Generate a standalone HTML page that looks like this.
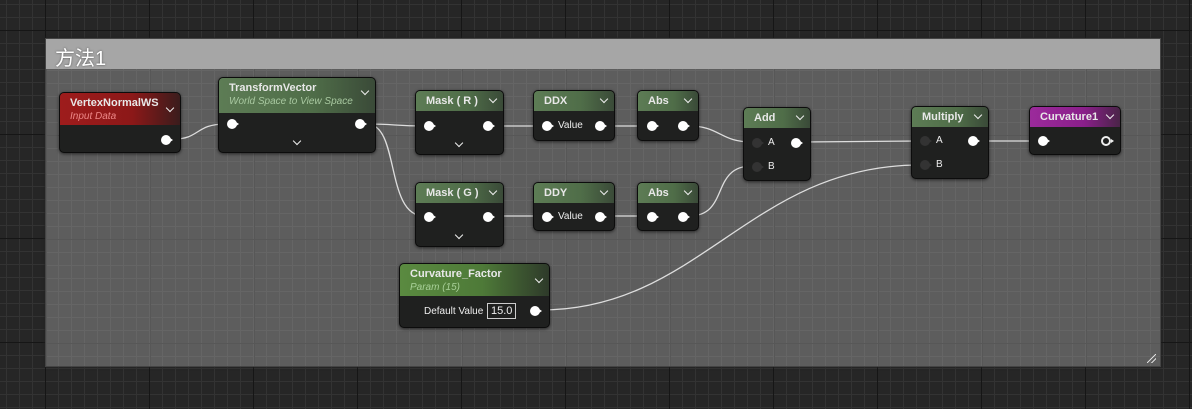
<!DOCTYPE html>
<html><head><meta charset="utf-8"><style>
*{margin:0;padding:0;box-sizing:border-box}
body{width:1192px;height:409px;overflow:hidden;background:#262626;position:relative;font-family:"Liberation Sans","Noto Sans CJK SC",sans-serif;
background-image:linear-gradient(90deg,#161616 1px,transparent 1px),linear-gradient(#161616 1px,transparent 1px),linear-gradient(90deg,#333 1px,transparent 1px),linear-gradient(#333 1px,transparent 1px);
background-size:104px 104px,104px 104px,13px 13px,13px 13px;background-position:45px 30px,45px 30px,6px 4px,6px 4px}
.cm{position:absolute;left:45px;top:38px;width:1116px;height:329px;background-color:#5d5d5d;
background-image:linear-gradient(90deg,#575757 1px,transparent 1px),linear-gradient(#575757 1px,transparent 1px),linear-gradient(90deg,#656565 1px,transparent 1px),linear-gradient(#656565 1px,transparent 1px);
background-size:104px 104px,104px 104px,13px 13px,13px 13px;background-position:0 -8px,0 -8px,-1px -8px,-1px -8px;border:1px solid #444;box-shadow:0 0 3px #222}
.tb{position:absolute;left:0;top:0;right:0;height:30px;background:#a6a6a6;color:#fff;font-size:20px;padding:3px 0 0 9px;text-shadow:0 0 2px #555}
.n{position:absolute;background:#1f201f;border:1px solid #0c0c0c;border-radius:5px;box-shadow:0 1px 3px rgba(0,0,0,.6);overflow:hidden;color:#ddd;font-size:11px}
.h{position:relative;color:#e8e8e8;font-weight:bold;font-size:11px;padding:4px 0 0 10px;height:20px}
.g{background:linear-gradient(90deg,#5d7c55,#4f6d48 60%,#3a4a38)}
.h .s{display:block;font-style:italic;font-weight:normal;font-size:10px;margin-top:2px}
.v{position:absolute;right:7px;top:5px;width:6px;height:6px;border-right:1.5px solid #eee;border-bottom:1.5px solid #eee;transform:rotate(45deg)}
.vb{position:absolute;width:6px;height:6px;border-right:1.5px solid #eee;border-bottom:1.5px solid #eee;transform:rotate(45deg)}
.p{position:absolute;width:10px;height:10px;border-radius:50%;background:#fff}
.p:after{content:"";position:absolute;left:9px;top:3px;border-left:3px solid #fff;border-top:2px solid transparent;border-bottom:2px solid transparent}
.p.d{background:#333}.p.d:after{border-left-color:#333}
.p.o{background:none;border:2px solid #eee}.p.o:after{left:8px;top:1px;border-left-color:#eee}
.t{position:absolute;font-size:10px;color:#eee}
svg{position:absolute;left:0;top:0}
</style></head><body>
<div class="cm"><div class="tb">方法1</div>
<div style="position:absolute;right:4px;bottom:3px;width:9px;height:9px;background:linear-gradient(135deg,transparent 45%,#ddd 45%,#ddd 55%,transparent 55%,transparent 70%,#ddd 70%,#ddd 80%,transparent 80%)"></div></div>
<svg width="1192" height="409" fill="none" stroke="#ddd" stroke-width="1.3">
<path d="M174 139 C200 139,195 124,226 124"/>
<path d="M367 124 C395 124,395 126,424 126"/>
<path d="M367 124 C400 124,385 216,424 216"/>
<path d="M494 126 L542 126"/><path d="M494 216 L542 216"/>
<path d="M606 126 L647 126"/><path d="M606 216 L647 216"/>
<path d="M689 126 C720 126,720 142,752 142"/>
<path d="M689 216 C730 216,710 166,752 166"/>
<path d="M801 142 L920 141"/><path d="M980 141 L1040 141"/>
<path d="M541 310 C700 310,750 165,920 165"/>
</svg>
<div class="n" style="left:59px;top:92px;width:122px;height:61px">
<div class="h" style="height:32px;background:linear-gradient(90deg,#9e1c1c,#8c1818 60%,#3a1c1c)">VertexNormalWS<span class="s" style="color:#e88">Input Data</span><div class="v" style="top:12px"></div></div>
<div class="p" style="left:101px;top:42px"></div></div>
<div class="n" style="left:218px;top:77px;width:158px;height:76px">
<div class="h g" style="height:35px">TransformVector<span class="s" style="color:#a8c8a0">World Space to View Space</span><div class="v" style="top:10px"></div></div>
<div class="p" style="left:8px;top:41px"></div><div class="p" style="left:136px;top:41px"></div><div class="vb" style="left:75px;top:60px"></div></div>
<div class="n" style="left:415px;top:90px;width:89px;height:65px"><div class="h g">Mask ( R )<div class="v"></div></div>
<div class="p" style="left:8px;top:30px"></div><div class="p" style="left:67px;top:30px"></div><div class="vb" style="left:40px;top:49px"></div></div>
<div class="n" style="left:415px;top:182px;width:89px;height:65px"><div class="h g">Mask ( G )<div class="v"></div></div>
<div class="p" style="left:8px;top:29px"></div><div class="p" style="left:67px;top:29px"></div><div class="vb" style="left:40px;top:49px"></div></div>
<div class="n" style="left:533px;top:90px;width:82px;height:51px"><div class="h g">DDX<div class="v"></div></div>
<div class="p" style="left:8px;top:30px"></div><div class="t" style="left:24px;top:29px">Value</div><div class="p" style="left:61px;top:30px"></div></div>
<div class="n" style="left:533px;top:182px;width:82px;height:49px"><div class="h g">DDY<div class="v"></div></div>
<div class="p" style="left:8px;top:29px"></div><div class="t" style="left:24px;top:28px">Value</div><div class="p" style="left:61px;top:29px"></div></div>
<div class="n" style="left:637px;top:90px;width:62px;height:51px"><div class="h g">Abs<div class="v"></div></div>
<div class="p" style="left:9px;top:30px"></div><div class="p" style="left:40px;top:30px"></div></div>
<div class="n" style="left:637px;top:182px;width:62px;height:49px"><div class="h g">Abs<div class="v"></div></div>
<div class="p" style="left:9px;top:29px"></div><div class="p" style="left:40px;top:29px"></div></div>
<div class="n" style="left:743px;top:107px;width:68px;height:74px"><div class="h g">Add<div class="v"></div></div>
<div class="p d" style="left:8px;top:30px"></div><div class="t" style="left:24px;top:29px">A</div><div class="p" style="left:47px;top:30px"></div>
<div class="p d" style="left:8px;top:54px"></div><div class="t" style="left:24px;top:53px">B</div></div>
<div class="n" style="left:911px;top:106px;width:78px;height:73px"><div class="h g">Multiply<div class="v"></div></div>
<div class="p d" style="left:8px;top:29px"></div><div class="t" style="left:24px;top:28px">A</div><div class="p" style="left:56px;top:29px"></div>
<div class="p d" style="left:8px;top:53px"></div><div class="t" style="left:24px;top:52px">B</div></div>
<div class="n" style="left:1029px;top:106px;width:92px;height:49px"><div class="h" style="background:linear-gradient(90deg,#9b2a9b,#8a1f8a 60%,#4a2448)">Curvature1<div class="v"></div></div>
<div class="p" style="left:8px;top:29px"></div><div class="p o" style="left:71px;top:29px"></div></div>
<div class="n" style="left:399px;top:263px;width:151px;height:65px">
<div class="h" style="height:32px;background:linear-gradient(90deg,#5a8a40,#4e7a38 55%,#2e3a2a)">Curvature_Factor<span class="s" style="color:#a8d098">Param (15)</span><div class="v" style="top:12px"></div></div>
<div class="t" style="left:24px;top:42px">Default Value</div>
<div class="t" style="left:87px;top:39px;border:1px solid #ccc;padding:1px 3px;font-size:11px">15.0</div>
<div class="p" style="left:130px;top:42px"></div></div>
</body></html>
